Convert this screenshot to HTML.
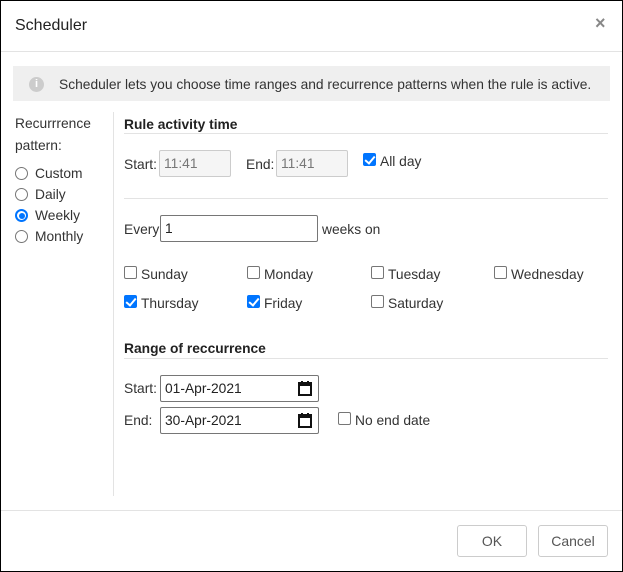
<!DOCTYPE html>
<html><head><style>
*{box-sizing:border-box;margin:0;padding:0}
body{width:623px;height:572px;background:#fff;font-family:"Liberation Sans",sans-serif;font-size:13.8px;color:#333;position:relative;overflow:hidden}
.frame{position:absolute;left:0;top:0;width:623px;height:572px;border:1px solid #000}
.a{position:absolute;white-space:nowrap}
.t{margin-top:1px}
.line{position:absolute;height:1px;background:#e3e3e3}
.inp{position:absolute;border:1px solid #767676;border-radius:2px;background:#fff;padding-left:4px;line-height:26px;color:#222}
.dis{background:#f5f5f5;border-color:#ccc;color:#777}
.cb{position:absolute;width:13px;height:13px;border:1px solid #767676;border-radius:2px;background:#fff}
.cb.on{background:#0075ff;border-color:#0075ff}
.cb.on:after{content:"";position:absolute;left:3px;top:0px;width:4px;height:8px;border:solid #fff;border-width:0 2px 2px 0;transform:rotate(40deg)}
.rd{position:absolute;width:13px;height:13px;border:1px solid #767676;border-radius:50%;background:#fff}
.rd.on{border:2px solid #0075ff}
.rd.on:after{content:"";position:absolute;left:1.5px;top:1.5px;width:6px;height:6px;border-radius:50%;background:#0075ff}
.btn{position:absolute;border:1px solid #ccc;border-radius:3px;background:#fff;text-align:center;line-height:31px;color:#555;font-size:14px}
b{font-weight:bold;color:#222}
</style></head><body>
<div class="frame"></div>
<div class="a" style="left:15px;top:17px;font-size:16px;color:#222">Scheduler</div>
<div class="a" style="left:595px;top:13px;font-size:18px;color:#888;font-weight:bold">×</div>
<div class="line" style="left:1px;top:51px;width:621px"></div>
<div class="a" style="left:13px;top:66px;width:597px;height:35px;background:#efefef"></div>
<div class="a" style="left:29px;top:77px;width:15px;height:15px;border-radius:50%;background:#ccc;color:#fff;font-size:11px;text-align:center;line-height:15px;font-weight:bold">i</div>
<div class="a" style="left:59px;top:77px;color:#333">Scheduler lets you choose time ranges and recurrence patterns when the rule is active.</div>

<div class="a" style="left:15px;top:116px">Recurrrence</div>
<div class="a" style="left:15px;top:138px">pattern:</div>
<div class="rd" style="left:15px;top:167px"></div><div class="a" style="left:35px;top:166px">Custom</div>
<div class="rd" style="left:15px;top:188px"></div><div class="a" style="left:35px;top:187px">Daily</div>
<div class="rd on" style="left:15px;top:209px"></div><div class="a" style="left:35px;top:208px">Weekly</div>
<div class="rd" style="left:15px;top:230px"></div><div class="a" style="left:35px;top:229px">Monthly</div>
<div class="a" style="left:113px;top:112px;width:1px;height:384px;background:#e3e3e3"></div>

<div class="a" style="left:124px;top:117px"><b>Rule activity time</b></div>
<div class="line" style="left:124px;top:133px;width:484px"></div>
<div class="a" style="left:124px;top:157px">Start:</div>
<div class="inp dis" style="left:159px;top:150px;width:72px;height:27px">11:41</div>
<div class="a" style="left:246px;top:157px">End:</div>
<div class="inp dis" style="left:276px;top:150px;width:72px;height:27px">11:41</div>
<div class="cb on" style="left:363px;top:153px"></div><div class="a" style="left:380px;top:154px">All day</div>
<div class="line" style="left:124px;top:198px;width:484px"></div>
<div class="a" style="left:124px;top:222px">Every</div>
<div class="inp" style="left:160px;top:215px;width:158px;height:27px">1</div>
<div class="a" style="left:322px;top:222px">weeks on</div>

<div class="cb" style="left:124px;top:266px"></div><div class="a" style="left:141px;top:267px">Sunday</div>
<div class="cb" style="left:247px;top:266px"></div><div class="a" style="left:264px;top:267px">Monday</div>
<div class="cb" style="left:371px;top:266px"></div><div class="a" style="left:388px;top:267px">Tuesday</div>
<div class="cb" style="left:494px;top:266px"></div><div class="a" style="left:511px;top:267px">Wednesday</div>
<div class="cb on" style="left:124px;top:295px"></div><div class="a" style="left:141px;top:296px">Thursday</div>
<div class="cb on" style="left:247px;top:295px"></div><div class="a" style="left:264px;top:296px">Friday</div>
<div class="cb" style="left:371px;top:295px"></div><div class="a" style="left:388px;top:296px">Saturday</div>

<div class="a" style="left:124px;top:341px"><b>Range of reccurrence</b></div>
<div class="line" style="left:124px;top:358px;width:484px"></div>
<div class="a" style="left:124px;top:381px">Start:</div>
<div class="inp" style="left:160px;top:375px;width:159px;height:27px">01-Apr-2021</div>
<div class="a" style="left:124px;top:413px">End:</div>
<div class="inp" style="left:160px;top:407px;width:159px;height:27px">30-Apr-2021</div>
<svg class="a" style="left:298px;top:380px" width="14" height="16" viewBox="0 0 14 16"><rect x="1" y="3" width="12" height="12" fill="none" stroke="#111" stroke-width="2"/><rect x="1" y="3" width="12" height="3" fill="#111"/><rect x="3" y="1" width="2" height="3" fill="#111"/><rect x="9" y="1" width="2" height="3" fill="#111"/></svg>
<svg class="a" style="left:298px;top:412px" width="14" height="16" viewBox="0 0 14 16"><rect x="1" y="3" width="12" height="12" fill="none" stroke="#111" stroke-width="2"/><rect x="1" y="3" width="12" height="3" fill="#111"/><rect x="3" y="1" width="2" height="3" fill="#111"/><rect x="9" y="1" width="2" height="3" fill="#111"/></svg>
<div class="cb" style="left:338px;top:412px"></div><div class="a" style="left:355px;top:413px">No end date</div>

<div class="line" style="left:1px;top:510px;width:621px"></div>
<div class="btn" style="left:457px;top:525px;width:70px;height:32px">OK</div>
<div class="btn" style="left:538px;top:525px;width:70px;height:32px">Cancel</div>
</body></html>
